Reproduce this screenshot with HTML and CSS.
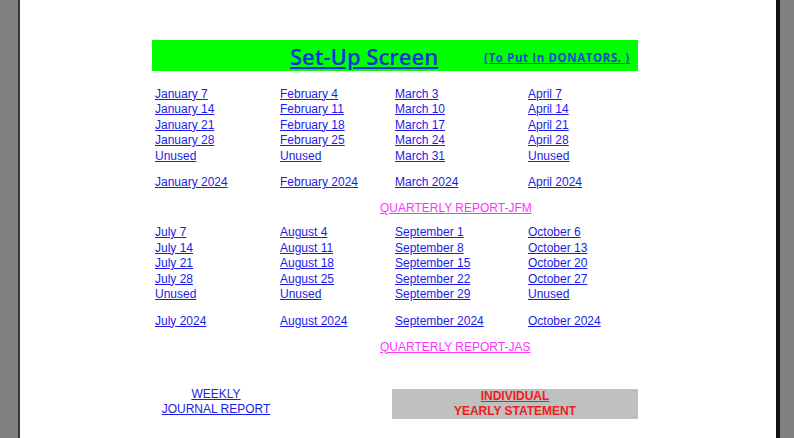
FILE: index.html
```html
<!DOCTYPE html>
<html>
<head>
<meta charset="utf-8">
<title>Set-Up Screen</title>
<link rel="stylesheet" href="styles.css">
</head>
<body>
<div class="page">
  <div class="sheet">
    <div class="banner">
      <div class="title-cell"><a class="title" href="#">Set-Up Screen</a></div>
      <div class="note-cell"><a class="note" href="#">(To Put In DONATORS. )</a></div>
    </div>

    <div class="months">
      <div class="col">
        <a href="#">January 7</a>
        <a href="#">January 14</a>
        <a href="#">January 21</a>
        <a href="#">January 28</a>
        <a href="#">Unused</a>
        <a class="month" href="#">January 2024</a>
      </div>
      <div class="col">
        <a href="#">February 4</a>
        <a href="#">February 11</a>
        <a href="#">February 18</a>
        <a href="#">February 25</a>
        <a href="#">Unused</a>
        <a class="month" href="#">February 2024</a>
      </div>
      <div class="col">
        <a href="#">March 3</a>
        <a href="#">March 10</a>
        <a href="#">March 17</a>
        <a href="#">March 24</a>
        <a href="#">March 31</a>
        <a class="month" href="#">March 2024</a>
      </div>
      <div class="col">
        <a href="#">April 7</a>
        <a href="#">April 14</a>
        <a href="#">April 21</a>
        <a href="#">April 28</a>
        <a href="#">Unused</a>
        <a class="month" href="#">April 2024</a>
      </div>
    </div>
    <div class="quarter"><a href="#">QUARTERLY REPORT-JFM</a></div>

    <div class="months second">
      <div class="col">
        <a href="#">July 7</a>
        <a href="#">July 14</a>
        <a href="#">July 21</a>
        <a href="#">July 28</a>
        <a href="#">Unused</a>
        <a class="month" href="#">July 2024</a>
      </div>
      <div class="col">
        <a href="#">August 4</a>
        <a href="#">August 11</a>
        <a href="#">August 18</a>
        <a href="#">August 25</a>
        <a href="#">Unused</a>
        <a class="month" href="#">August 2024</a>
      </div>
      <div class="col">
        <a href="#">September 1</a>
        <a href="#">September 8</a>
        <a href="#">September 15</a>
        <a href="#">September 22</a>
        <a href="#">September 29</a>
        <a class="month" href="#">September 2024</a>
      </div>
      <div class="col">
        <a href="#">October 6</a>
        <a href="#">October 13</a>
        <a href="#">October 20</a>
        <a href="#">October 27</a>
        <a href="#">Unused</a>
        <a class="month" href="#">October 2024</a>
      </div>
    </div>
    <div class="quarter"><a href="#">QUARTERLY REPORT-JAS</a></div>

    <div class="bottom">
      <div class="weekly"><a href="#">WEEKLY<br>JOURNAL REPORT</a></div>
      <div class="spacer"></div>
      <div class="yearly"><a href="#">INDIVIDUAL</a><span>YEARLY STATEMENT</span></div>
    </div>
  </div>
</div>
</body>
</html>
```

FILE: styles.css
```css
html, body {
  margin: 0;
  padding: 0;
}
body {
  background: #808080;
  height: 438px;
  overflow: hidden;
  font-family: "Liberation Sans", Arial, sans-serif;
  font-size: 12px;
}
.page {
  margin-left: 18px;
  width: 756px;
  height: 438px;
  background: #ffffff;
  border-left: 2px solid #3a3a3a;
  border-right: 4px solid #111111;
}
.sheet {
  margin-left: 132px;
  width: 486px;
  padding-top: 40px;
}
.banner {
  height: 31px;
  background: #00ff00;
  display: flex;
  align-items: center;
  overflow: hidden;
}
.title-cell {
  flex: none;
  width: 332px;
  padding-left: 138px;
  box-sizing: border-box;
  white-space: nowrap;
}
.title {
  font-family: "Open Sans", "DejaVu Sans", sans-serif;
  font-weight: 600;
  font-size: 22px;
  color: #0b2fe3;
}
.note-cell {
  flex: 1;
  min-width: 0;
  white-space: nowrap;
  padding-top: 4px;
}
.note {
  font-family: "Open Sans", "DejaVu Sans", sans-serif;
  font-weight: 700;
  font-size: 11.5px;
  letter-spacing: 0.6px;
  color: #2146d6;
}
a {
  color: #1c1ce8;
  text-decoration: underline;
}
.months {
  display: grid;
  grid-template-columns: 125px 115px 133px 1fr;
  padding-left: 3px;
  margin-top: 15.5px;
  line-height: 15.5px;
}
.months.second {
  margin-top: 8.5px;
}
.col a {
  display: block;
  width: fit-content;
  white-space: nowrap;
}
.col a.month {
  margin-top: 11px;
}
.quarter {
  margin-top: 10.5px;
  padding-left: 228px;
  line-height: 15.5px;
}
.quarter a {
  color: #ff33ff;
}
.bottom {
  display: grid;
  grid-template-columns: 128px 112px 246px;
  margin-top: 34px;
  line-height: 15px;
}
.weekly {
  text-align: center;
  margin-top: -2.5px;
}
.yearly {
  background: #c0c0c0;
  height: 30px;
  display: flex;
  flex-direction: column;
  align-items: center;
  font-weight: 700;
  color: #f01c1c;
}
.yearly a {
  color: #f01c1c;
}
```
